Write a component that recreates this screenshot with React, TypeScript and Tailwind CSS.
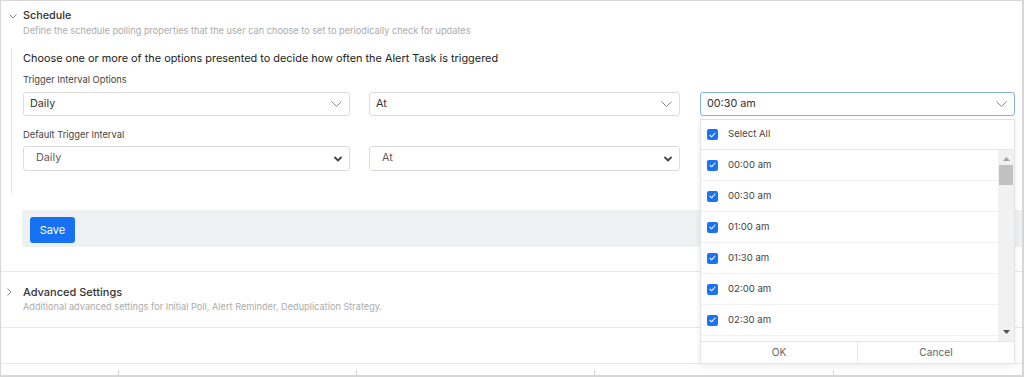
import React from "react";

const times = ["00:00 am", "00:30 am", "01:00 am", "01:30 am", "02:00 am", "02:30 am", "03:00 am"];

const Chevron = ({ bold }: { bold?: boolean }) =>
  bold ? (
    <svg width="8" height="6" viewBox="0 0 8 6" className="text-[#444]">
      <path d="M1 1.5 L4 4.5 L7 1.5" fill="none" stroke="currentColor" strokeWidth="1.8" strokeLinecap="round" strokeLinejoin="round" />
    </svg>
  ) : (
    <svg width="11" height="6" viewBox="0 0 11 6" className="text-[#8a8a8a]">
      <path d="M0.5 0.5 L5.5 5.5 L10.5 0.5" fill="none" stroke="currentColor" strokeWidth="1" />
    </svg>
  );

const Check = () => (
  <span className="w-[11px] h-[11px] rounded-[2px] bg-[#1a73f0] flex items-center justify-center shrink-0">
    <svg width="7" height="6" viewBox="0 0 8 7">
      <path d="M1 3.8 L3 5.6 L7 1.2" fill="none" stroke="white" strokeWidth="1.2" strokeLinecap="round" strokeLinejoin="round" />
    </svg>
  </span>
);

const Select = ({
  value,
  width,
  muted,
  focused,
  tall,
}: {
  value: string;
  width: string;
  muted?: boolean;
  focused?: boolean;
  tall?: boolean;
}) => (
  <div
    className={`${width} ${tall ? "h-[25px]" : "h-[24px]"} flex items-center justify-between rounded-[3px] border bg-white ${
      focused ? "border-[#86aee8]" : "border-[#dcdcdc]"
    } ${muted ? "pl-[12px] pr-[7px] text-[#5c5c5c]" : "pl-[6px] pr-[7px] text-[#333]"} text-[10.8px]`}
  >
    <span>{value}</span>
    <Chevron bold={muted} />
  </div>
);

const Dropdown = () => (
  <div className="absolute left-0 top-full mt-[3px] w-[315px] h-[245px] bg-white border border-[#e3e3e3] shadow-[0_2px_6px_rgba(0,0,0,0.08)] flex flex-col z-10">
    <div className="h-[30px] border-b border-[#e6e6e6] flex items-center pl-[6px] gap-[10px] text-[9.6px] text-[#444] shrink-0">
      <Check />
      <span>Select All</span>
    </div>
    <div className="h-[191px] flex shrink-0">
      <div className="flex-1 overflow-hidden">
        {times.map((t) => (
          <div key={t} className="h-[31px] border-b border-[#f1f1f1] flex items-center pl-[6px] gap-[10px] text-[9.6px] text-[#444]">
            <Check />
            <span>{t}</span>
          </div>
        ))}
      </div>
      <div className="w-[16px] bg-[#f1f1f1] flex flex-col items-center pt-[7px] pb-[7px]">
        <svg width="7" height="4" viewBox="0 0 7 4">
          <path d="M0 4 L3.5 0 L7 4 Z" fill="#a3a3a3" />
        </svg>
        <div className="mt-[4px] w-[14px] h-[20px] bg-[#c1c1c1]" />
        <div className="flex-1" />
        <svg width="7" height="4" viewBox="0 0 7 4">
          <path d="M0 0 L3.5 4 L7 0 Z" fill="#505050" />
        </svg>
      </div>
    </div>
    <div className="h-[22px] border-t border-[#e6e6e6] flex text-[10.2px] leading-[20px] text-[#666] shrink-0">
      <div className="w-[157px] text-center border-r border-[#e6e6e6]">OK</div>
      <div className="flex-1 text-center">Cancel</div>
    </div>
  </div>
);

const App = () => {
  return (
    <div
      className="relative w-[1024px] h-[377px] overflow-hidden bg-white border-t border-l border-r-2 border-b-2 border-[#d6d6d6]"
      style={{ fontFamily: "Inter, 'Noto Sans', sans-serif" }}
    >
      {/* Schedule */}
      <div className="h-[271px] border-b border-[#e8e8e8] pt-[7px]">
        <div className="flex">
          <div className="w-[22px] h-[16px] flex items-center justify-center pl-[1px]">
            <svg width="8" height="5" viewBox="0 0 8 5">
              <path d="M0.5 0.5 L4 4 L7.5 0.5" fill="none" stroke="#888" strokeWidth="1" />
            </svg>
          </div>
          <div>
            <div className="text-[10.8px] leading-[16px] text-[#333] font-medium">Schedule</div>
            <div className="text-[9.2px] leading-[14px] text-[#ababab]">
              Define the schedule polling properties that the user can choose to set to periodically check for updates
            </div>
          </div>
        </div>

        <div className="mt-[10px] ml-[10px] border-l border-[#e6e6e6] pl-[11px] pb-[22px]">
          <div className="text-[10.9px] leading-[20px] text-[#222]">
            Choose one or more of the options presented to decide how often the Alert Task is triggered
          </div>
          <div className="mt-[5px] text-[9.3px] leading-[14px] text-[#444]">Trigger Interval Options</div>
          <div className="mt-[5px] flex">
            <Select value="Daily" width="w-[327px]" />
            <div className="ml-[19px]">
              <Select value="At" width="w-[311px]" />
            </div>
            <div className="ml-[20px] relative">
              <Select value="00:30 am" width="w-[315px]" focused />
              <Dropdown />
            </div>
          </div>
          <div className="mt-[12px] text-[9.3px] leading-[14px] text-[#444]">Default Trigger Interval</div>
          <div className="mt-[4px] flex">
            <Select value="Daily" width="w-[327px]" muted tall />
            <div className="ml-[19px]">
              <Select value="At" width="w-[311px]" muted tall />
            </div>
          </div>
        </div>

        <div className="mt-[17px] ml-[21px] h-[37px] bg-[#eff0f2] pt-[6px] pl-[8px]">
          <button className="w-[45px] h-[26px] rounded-[3px] bg-[#1672f3] text-white text-[11px]">Save</button>
        </div>
      </div>

      {/* Advanced Settings */}
      <div className="h-[56px] border-b border-[#e8e8e8] pt-[12px] flex">
        <div className="w-[22px] h-[16px] flex items-center justify-center pr-[6px]">
          <svg width="5" height="8" viewBox="0 0 5 8">
            <path d="M0.5 0.5 L4 4 L0.5 7.5" fill="none" stroke="#888" strokeWidth="1" />
          </svg>
        </div>
        <div>
          <div className="text-[11px] leading-[16px] text-[#333] font-medium">Advanced Settings</div>
          <div className="text-[9.2px] leading-[14px] text-[#ababab]">
            Additional advanced settings for Initial Poll, Alert Reminder, Deduplication Strategy.
          </div>
        </div>
      </div>

      <div className="h-[36px] border-b border-[#e8e8e8]" />

      <div className="flex h-[11px] pt-[6px]">
        <div className="w-[117px]" />
        <div className="w-[238px] border-l border-[#d6d6d6]" />
        <div className="w-[238px] border-l border-[#d6d6d6]" />
        <div className="w-[239px] border-l border-[#d6d6d6]" />
        <div className="flex-1 border-l border-[#d6d6d6]" />
      </div>
    </div>
  );
};

export default App;
